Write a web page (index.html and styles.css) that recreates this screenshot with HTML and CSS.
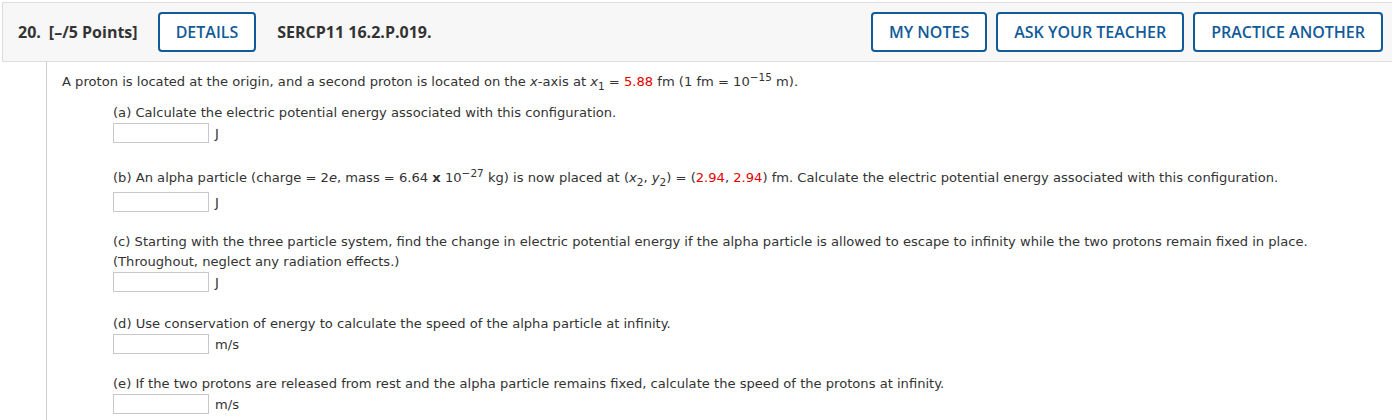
FILE: index.html
```html
<!DOCTYPE html>
<html>
<head>
<meta charset="utf-8">
<link rel="stylesheet" href="styles.css">
</head>
<body>
<div class="page">
  <div class="qhead">
    <span class="qnum">20.</span>
    <span class="qpts">[–/5 Points]</span>
    <button class="btn">DETAILS</button>
    <span class="qcode">SERCP11 16.2.P.019.</span>
    <span class="spacer"></span>
    <button class="btn">MY NOTES</button>
    <button class="btn">ASK YOUR TEACHER</button>
    <button class="btn">PRACTICE ANOTHER</button>
  </div>
  <div class="qbody">
    <p class="intro">A proton is located at the origin, and a second proton is located on the <i>x</i>-axis at <i>x</i><sub>1</sub> = <span class="red">5.88</span> fm (1 fm = 10<sup>−15</sup> m).</p>
    <div class="part">
      <p>(a) Calculate the electric potential energy associated with this configuration.</p>
      <div class="ans"><span class="box"></span><span class="unit">J</span></div>
    </div>
    <div class="part">
      <p class="tall">(b) An alpha particle (charge = 2<i>e</i>, mass = 6.64 <b>x</b> 10<sup>−27</sup> kg) is now placed at (<i>x</i><sub>2</sub>, <i>y</i><sub>2</sub>) = (<span class="red">2.94</span>, <span class="red">2.94</span>) fm. Calculate the electric potential energy associated with this configuration.</p>
      <div class="ans"><span class="box"></span><span class="unit">J</span></div>
    </div>
    <div class="part wide">
      <p>(c) Starting with the three particle system, find the change in electric potential energy if the alpha particle is allowed to escape to infinity while the two protons remain fixed in place.<br>(Throughout, neglect any radiation effects.)</p>
      <div class="ans"><span class="box"></span><span class="unit">J</span></div>
    </div>
    <div class="part">
      <p>(d) Use conservation of energy to calculate the speed of the alpha particle at infinity.</p>
      <div class="ans"><span class="box"></span><span class="unit">m/s</span></div>
    </div>
    <div class="part">
      <p>(e) If the two protons are released from rest and the alpha particle remains fixed, calculate the speed of the protons at infinity.</p>
      <div class="ans"><span class="box"></span><span class="unit">m/s</span></div>
    </div>
  </div>
</div>
</body>
</html>
```
FILE: styles.css
```css
html, body {
  margin: 0;
  padding: 0;
  background: #fff;
}
.page {
  padding: 2px 0 0 2px;
}
.qhead {
  display: flex;
  align-items: center;
  height: 58px;
  border: 1px solid #dcdcdc;
  border-right: none;
  background: #f7f7f7;
  padding-left: 15px;
  font-family: "Open Sans", "Liberation Sans", sans-serif;
  font-weight: 700;
  font-size: 16px;
  color: #333;
}
.qnum {
  margin-right: 8px;
}
.qpts {
  font-weight: 700;
  margin-right: 20px;
}
.qcode {
  font-weight: 700;
  margin-left: 12px;
}
.spacer {
  flex: 1;
}
.btn {
  height: 40px;
  box-sizing: border-box;
  border: 2px solid #125b98;
  border-radius: 4px;
  background: #fff;
  color: #125b98;
  font-family: "Open Sans", "Liberation Sans", sans-serif;
  font-weight: 600;
  font-size: 16px;
  padding: 0 16px;
  margin-right: 9px;
  cursor: pointer;
}
.qbody {
  margin-left: 44px;
  border-left: 1px solid #cfcfcf;
  padding: 10px 0 0 15px;
  min-height: 360px;
  font-family: "DejaVu Sans", Verdana, sans-serif;
  font-size: 13.1px;
  color: #333;
}
.qbody p {
  margin: 0;
  line-height: 20px;
}
.intro {
  margin-bottom: 11px !important;
}
.part {
  margin-left: 51px;
  margin-bottom: 20px;
}
.part.wide {
  margin-bottom: 22px;
}
.qbody p.tall {
  padding: 5px 0 4px;
}
sub, sup {
  font-size: 10.5px;
  line-height: 0;
}
.red {
  color: #e60000;
}
.ans {
  display: flex;
  align-items: center;
  height: 20px;
}
.box {
  display: inline-block;
  width: 94px;
  height: 18px;
  border: 1px solid #c8c8c8;
  background: #fff;
}
.unit {
  margin-left: 6px;
}
```
